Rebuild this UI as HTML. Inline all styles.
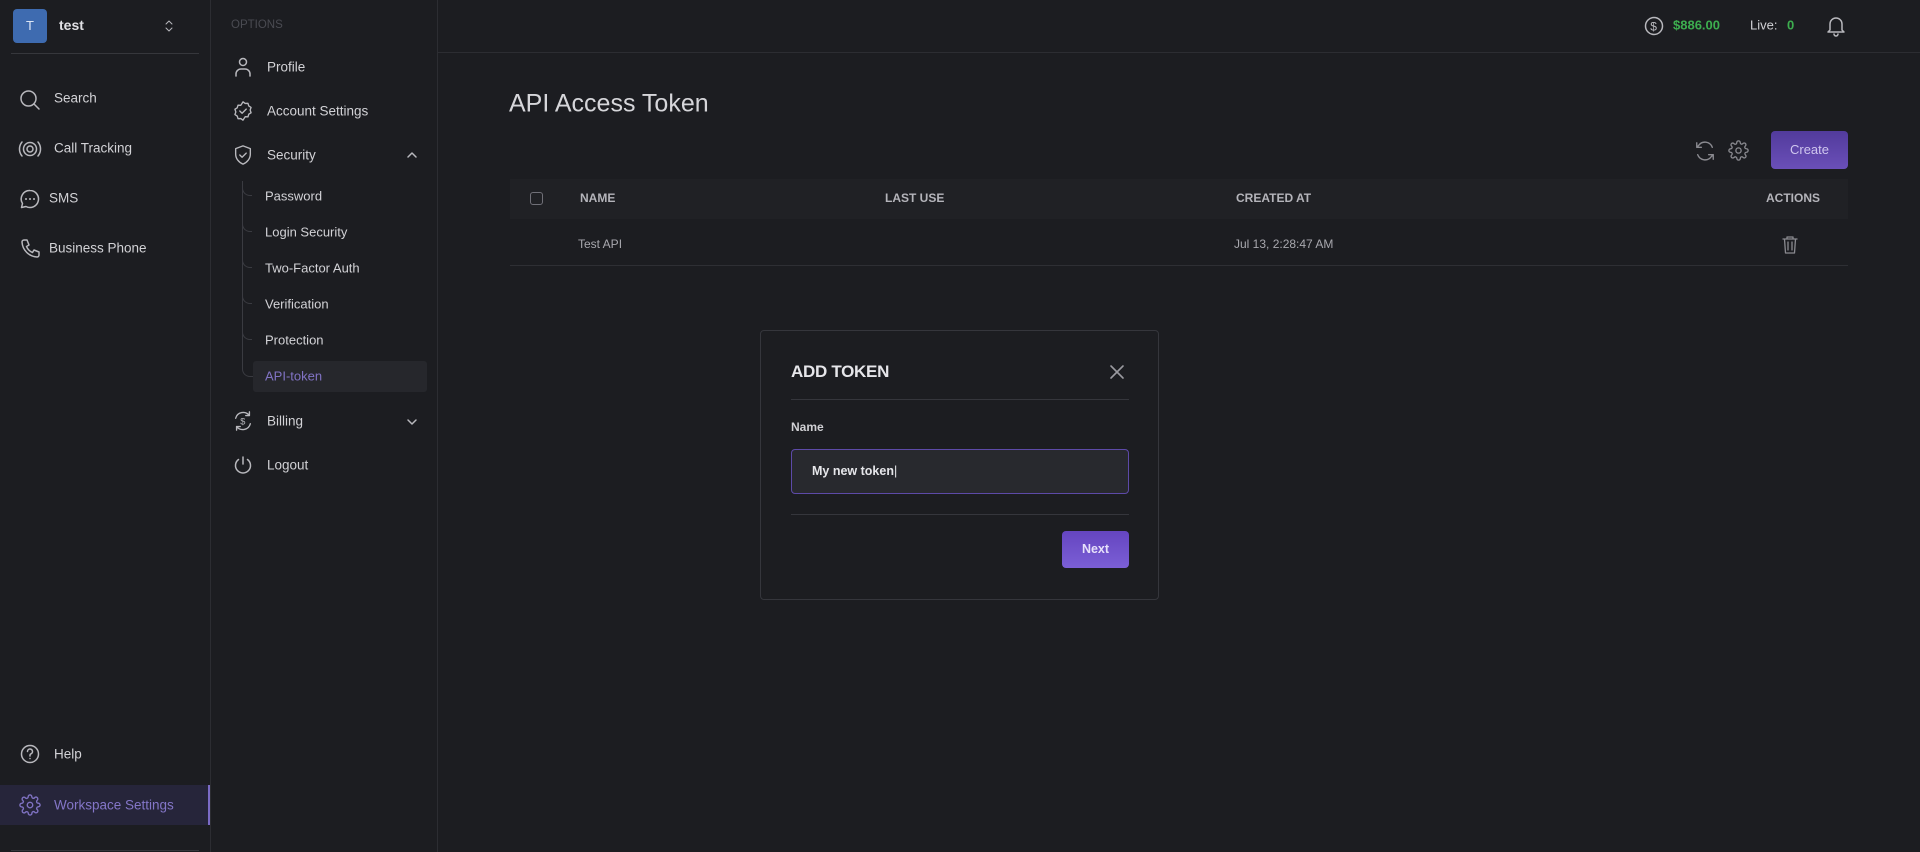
<!DOCTYPE html>
<html><head><meta charset="utf-8"><style>
*{box-sizing:border-box;margin:0;padding:0}
body{width:1920px;height:852px;background:#1c1d21;font-family:"Liberation Sans",sans-serif;color:#d2d2d6;position:relative;overflow:hidden;font-size:13px}
.a{position:absolute;white-space:nowrap}
svg{position:absolute;fill:none;stroke:#b8b8bd;stroke-width:1.5;stroke-linecap:round;stroke-linejoin:round}
.t{transform:translateY(-50%)}
.vl{position:absolute;background:#2c2d32}
</style></head><body>
<div class="vl" style="left:210px;top:0;width:1px;height:852px"></div>
<div class="vl" style="left:437px;top:0;width:1px;height:852px"></div>
<div class="vl" style="left:438px;top:52px;width:1482px;height:1px"></div>
<div class="vl" style="left:11px;top:53px;width:188px;height:1px;background:#36373c"></div>
<div class="vl" style="left:11px;top:850px;width:188px;height:1px;background:#36373c"></div>

<div class="a" style="left:13px;top:9px;width:34px;height:34px;border-radius:4px;background:#3e6bb0;color:#dce6f5;font-size:13px;line-height:34px;text-align:center">T</div>
<div class="a t" style="left:59px;top:25px;font-weight:bold;font-size:14px;color:#e0e0e4">test</div>
<svg style="left:163px;top:18px" width="12" height="16" viewBox="0 0 12 16"><path d="M3 6l3-3 3 3M3 10l3 3 3-3" stroke-width="1"/></svg>

<svg style="left:19px;top:89px" width="22" height="22" viewBox="0 0 22 22"><circle cx="9.5" cy="9.5" r="7.5"/><path d="M15 15l5 5"/></svg>
<div class="a t" style="left:54px;top:98px;font-size:13.5px">Search</div>
<svg style="left:18px;top:137px" width="24" height="24" viewBox="0 0 24 24"><circle cx="12" cy="12" r="3"/><circle cx="12" cy="12" r="6.5"/><path d="M4 5a11 11 0 0 0 0 14M20 5a11 11 0 0 1 0 14"/></svg>
<div class="a t" style="left:54px;top:148px;font-size:13.5px">Call Tracking</div>
<svg style="left:19px;top:188px" width="22" height="22" viewBox="0 0 22 22"><path d="M11 2.5a8.5 8.5 0 1 1-4 16L2.5 19.5l1-4A8.5 8.5 0 0 1 11 2.5z"/><path d="M7 11h.01M11 11h.01M15 11h.01" stroke-width="2"/></svg>
<div class="a t" style="left:49px;top:198px;font-size:13.5px">SMS</div>
<svg style="left:19px;top:238px" width="22" height="22" viewBox="0 0 22 22"><path d="M5 2h3l2 5-2.5 1.5a11 11 0 0 0 6 6L15 12l5 2v3a2 2 0 0 1-2 2A16 16 0 0 1 3 4a2 2 0 0 1 2-2z"/></svg>
<div class="a t" style="left:49px;top:248px;font-size:13.5px">Business Phone</div>

<svg style="left:20px;top:744px" width="20" height="20" viewBox="0 0 20 20"><circle cx="10" cy="10" r="8.5"/><path d="M7.5 7.5a2.5 2.5 0 1 1 3.5 2.3c-.7.3-1 .8-1 1.5v.7M10 14.5h.01"/></svg>
<div class="a t" style="left:54px;top:754px;font-size:13.5px">Help</div>
<div class="a" style="left:0;top:785px;width:210px;height:40px;background:#26253a;border-right:2px solid #7b6bc6"></div>
<svg style="left:19px;top:794px;stroke:#7f72c2" width="22" height="22" viewBox="0 0 24 24"><circle cx="12" cy="12" r="3"/><path d="M19.4 15a1.7 1.7 0 0 0 .3 1.8l.1.1a2 2 0 1 1-2.8 2.8l-.1-.1a1.7 1.7 0 0 0-1.8-.3 1.7 1.7 0 0 0-1 1.5V21a2 2 0 1 1-4 0v-.1a1.7 1.7 0 0 0-1.1-1.5 1.7 1.7 0 0 0-1.8.3l-.1.1a2 2 0 1 1-2.8-2.8l.1-.1a1.7 1.7 0 0 0 .3-1.8 1.7 1.7 0 0 0-1.5-1H3a2 2 0 1 1 0-4h.1a1.7 1.7 0 0 0 1.5-1.1 1.7 1.7 0 0 0-.3-1.8l-.1-.1a2 2 0 1 1 2.8-2.8l.1.1a1.7 1.7 0 0 0 1.8.3H9a1.7 1.7 0 0 0 1-1.5V3a2 2 0 1 1 4 0v.1a1.7 1.7 0 0 0 1 1.5 1.7 1.7 0 0 0 1.8-.3l.1-.1a2 2 0 1 1 2.8 2.8l-.1.1a1.7 1.7 0 0 0-.3 1.8V9a1.7 1.7 0 0 0 1.5 1H21a2 2 0 1 1 0 4h-.1a1.7 1.7 0 0 0-1.5 1z"/></svg>
<div class="a t" style="left:54px;top:805px;font-size:13.5px;color:#8476c8">Workspace Settings</div>

<div class="a t" style="left:231px;top:25px;font-size:11.5px;color:#4a4b52">OPTIONS</div>
<svg style="left:234px;top:57px" width="18" height="20" viewBox="0 0 18 20"><circle cx="9" cy="5" r="3.5"/><path d="M2 19v-2a5 5 0 0 1 5-5h4a5 5 0 0 1 5 5v2"/></svg>
<div class="a t" style="left:267px;top:67px;font-size:13.5px">Profile</div>
<svg style="left:232px;top:100px" width="22" height="22" viewBox="0 0 24 24"><path d="M12 2l2.4 1.8 3-.2.9 2.9 2.5 1.6-1 2.9 1 2.9-2.5 1.6-.9 2.9-3-.2L12 22l-2.4-1.8-3 .2-.9-2.9-2.5-1.6 1-2.9-1-2.9 2.5-1.6.9-2.9 3 .2z"/><path d="M8.5 12l2.5 2.5 4.5-4.5"/></svg>
<div class="a t" style="left:267px;top:111px;font-size:13.5px">Account Settings</div>
<svg style="left:232px;top:144px" width="22" height="22" viewBox="0 0 24 24"><path d="M12 2l8 3v6c0 5-3.5 9-8 11-4.5-2-8-6-8-11V5z"/><path d="M8.5 12l2.5 2.5 4.5-4.5"/></svg>
<div class="a t" style="left:267px;top:155px;font-size:13.5px">Security</div>
<svg style="left:405px;top:150px" width="14" height="10" viewBox="0 0 14 10"><path d="M3 7l4-4 4 4"/></svg>
<div class="a" style="left:242px;top:181px;width:1px;height:180px;background:#3a3b41"></div>
<div class="a" style="left:242px;top:181px;width:10px;height:15px;border-left:1px solid #3a3b41;border-bottom:1px solid #3a3b41;border-bottom-left-radius:8px"></div>
<div class="a" style="left:242px;top:217px;width:10px;height:15px;border-left:1px solid #3a3b41;border-bottom:1px solid #3a3b41;border-bottom-left-radius:8px"></div>
<div class="a" style="left:242px;top:253px;width:10px;height:15px;border-left:1px solid #3a3b41;border-bottom:1px solid #3a3b41;border-bottom-left-radius:8px"></div>
<div class="a" style="left:242px;top:289px;width:10px;height:15px;border-left:1px solid #3a3b41;border-bottom:1px solid #3a3b41;border-bottom-left-radius:8px"></div>
<div class="a" style="left:242px;top:325px;width:10px;height:15px;border-left:1px solid #3a3b41;border-bottom:1px solid #3a3b41;border-bottom-left-radius:8px"></div>
<div class="a" style="left:242px;top:361px;width:11px;height:16px;border-left:1px solid #3a3b41;border-bottom:1px solid #3a3b41;border-bottom-left-radius:8px"></div>
<div class="a t" style="left:265px;top:196px;font-size:13px">Password</div>
<div class="a t" style="left:265px;top:232px;font-size:13px">Login Security</div>
<div class="a t" style="left:265px;top:268px;font-size:13px">Two-Factor Auth</div>
<div class="a t" style="left:265px;top:304px;font-size:13px">Verification</div>
<div class="a t" style="left:265px;top:340px;font-size:13px">Protection</div>
<div class="a" style="left:253px;top:361px;width:174px;height:31px;background:#26272c;border-radius:3px"></div>
<div class="a t" style="left:265px;top:376px;font-size:13px;color:#8173c4">API-token</div>
<svg style="left:232px;top:410px" width="22" height="22" viewBox="0 0 24 24"><path d="M4 9a8.5 8.5 0 0 1 15-3M20 15a8.5 8.5 0 0 1-15 3M19 2v4h-4M5 22v-4h4"/><text x="9" y="16" font-size="10" fill="#b8b8bd" stroke="none" font-family="Liberation Sans">$</text></svg>
<div class="a t" style="left:267px;top:421px;font-size:13.5px">Billing</div>
<svg style="left:405px;top:417px" width="14" height="10" viewBox="0 0 14 10"><path d="M3 3l4 4 4-4"/></svg>
<svg style="left:233px;top:455px" width="20" height="20" viewBox="0 0 20 20"><path d="M10 2v7M5.5 4.5a7.5 7.5 0 1 0 9 0"/></svg>
<div class="a t" style="left:267px;top:465px;font-size:13.5px">Logout</div>

<svg style="left:1644px;top:16px" width="20" height="20" viewBox="0 0 20 20"><circle cx="10" cy="10" r="8.5"/><text x="6.2" y="14.5" font-size="12" fill="#b8b8bd" stroke="none" font-family="Liberation Sans">$</text></svg>
<div class="a t" style="left:1673px;top:25px;font-size:13px;color:#3dae4f;font-weight:bold">$886.00</div>
<div class="a t" style="left:1750px;top:25px;font-size:13px">Live:</div>
<div class="a t" style="left:1787px;top:25px;font-size:13px;color:#3dae4f;font-weight:bold">0</div>
<svg style="left:1826px;top:15px" width="20" height="22" viewBox="0 0 20 22"><path d="M4 15V9a6 6 0 0 1 12 0v6l2 2H2z"/><path d="M8 19a2 2 0 0 0 4 0"/></svg>

<div class="a t" style="left:509px;top:104px;font-size:25px;color:#d6d6da">API Access Token</div>
<svg style="left:1694px;top:140px" width="22" height="22" viewBox="0 0 24 24"><path d="M20 8A8.5 8.5 0 0 0 5 6l-2 2M4 16a8.5 8.5 0 0 0 15 2l2-2M3 3v5h5M21 21v-5h-5" stroke="#8a8a90"/></svg>
<svg style="left:1728px;top:140px" width="21" height="21" viewBox="0 0 24 24"><circle cx="12" cy="12" r="3" stroke="#8a8a90"/><path stroke="#8a8a90" d="M19.4 15a1.7 1.7 0 0 0 .3 1.8l.1.1a2 2 0 1 1-2.8 2.8l-.1-.1a1.7 1.7 0 0 0-1.8-.3 1.7 1.7 0 0 0-1 1.5V21a2 2 0 1 1-4 0v-.1a1.7 1.7 0 0 0-1.1-1.5 1.7 1.7 0 0 0-1.8.3l-.1.1a2 2 0 1 1-2.8-2.8l.1-.1a1.7 1.7 0 0 0 .3-1.8 1.7 1.7 0 0 0-1.5-1H3a2 2 0 1 1 0-4h.1a1.7 1.7 0 0 0 1.5-1.1 1.7 1.7 0 0 0-.3-1.8l-.1-.1a2 2 0 1 1 2.8-2.8l.1.1a1.7 1.7 0 0 0 1.8.3H9a1.7 1.7 0 0 0 1-1.5V3a2 2 0 1 1 4 0v.1a1.7 1.7 0 0 0 1 1.5 1.7 1.7 0 0 0 1.8-.3l.1-.1a2 2 0 1 1 2.8 2.8l-.1.1a1.7 1.7 0 0 0-.3 1.8V9a1.7 1.7 0 0 0 1.5 1H21a2 2 0 1 1 0 4h-.1a1.7 1.7 0 0 0-1.5 1z"/></svg>
<div class="a" style="left:1771px;top:131px;width:77px;height:38px;border-radius:4px;background:linear-gradient(#523b9c,#6a4fb8);color:#cfc6ee;font-size:13px;line-height:38px;text-align:center">Create</div>

<div class="a" style="left:510px;top:179px;width:1338px;height:40px;background:#202125"></div>
<div class="a" style="left:530px;top:192px;width:13px;height:13px;border:1px solid #707078;border-radius:3px"></div>
<div class="a t" style="left:580px;top:198px;font-size:12px;color:#b4b4ba;font-weight:bold">NAME</div>
<div class="a t" style="left:885px;top:198px;font-size:12px;color:#b4b4ba;font-weight:bold">LAST USE</div>
<div class="a t" style="left:1236px;top:198px;font-size:12px;color:#b4b4ba;font-weight:bold">CREATED AT</div>
<div class="a t" style="left:1766px;top:198px;font-size:12px;color:#b4b4ba;font-weight:bold">ACTIONS</div>
<div class="a t" style="left:578px;top:244px;font-size:12px;color:#a8a8ae">Test API</div>
<div class="a t" style="left:1234px;top:244px;font-size:12px;color:#a8a8ae">Jul 13, 2:28:47 AM</div>
<svg style="left:1781px;top:235px" width="18" height="20" viewBox="0 0 18 20"><path d="M2 4h14M6 4V2h6v2M3.5 4l1 14h9l1-14M7 7v8M11 7v8" stroke="#8a8a90" stroke-width="1.3"/></svg>
<div class="a" style="left:510px;top:265px;width:1338px;height:1px;background:#2e2f34"></div>

<div class="a" style="left:760px;top:330px;width:399px;height:270px;border:1px solid #35363c;border-radius:4px;background:#1c1d21"></div>
<div class="a t" style="left:791px;top:372px;font-size:17px;font-weight:bold;color:#e6e6ea;letter-spacing:-0.3px">ADD TOKEN</div>
<svg style="left:1109px;top:364px" width="16" height="16" viewBox="0 0 16 16"><path d="M2 2l12 12M14 2L2 14" stroke="#9a9aa0" stroke-width="1.6"/></svg>
<div class="a" style="left:791px;top:399px;width:338px;height:1px;background:#35363c"></div>
<div class="a t" style="left:791px;top:427px;font-size:12px;font-weight:bold;color:#d0d0d4">Name</div>
<div class="a" style="left:791px;top:449px;width:338px;height:45px;border:1px solid #5d4aa8;border-radius:4px;background:#28292e"></div>
<div class="a t" style="left:812px;top:471px;font-size:12.5px;font-weight:bold;color:#e6e6ea">My new token<span style="font-weight:normal">|</span></div>
<div class="a" style="left:791px;top:514px;width:338px;height:1px;background:#35363c"></div>
<div class="a" style="left:1062px;top:531px;width:67px;height:37px;border-radius:4px;background:linear-gradient(#6545c0,#7b5fd6);color:#e6e0fa;font-size:12.5px;font-weight:bold;line-height:37px;text-align:center">Next</div>
</body></html>
